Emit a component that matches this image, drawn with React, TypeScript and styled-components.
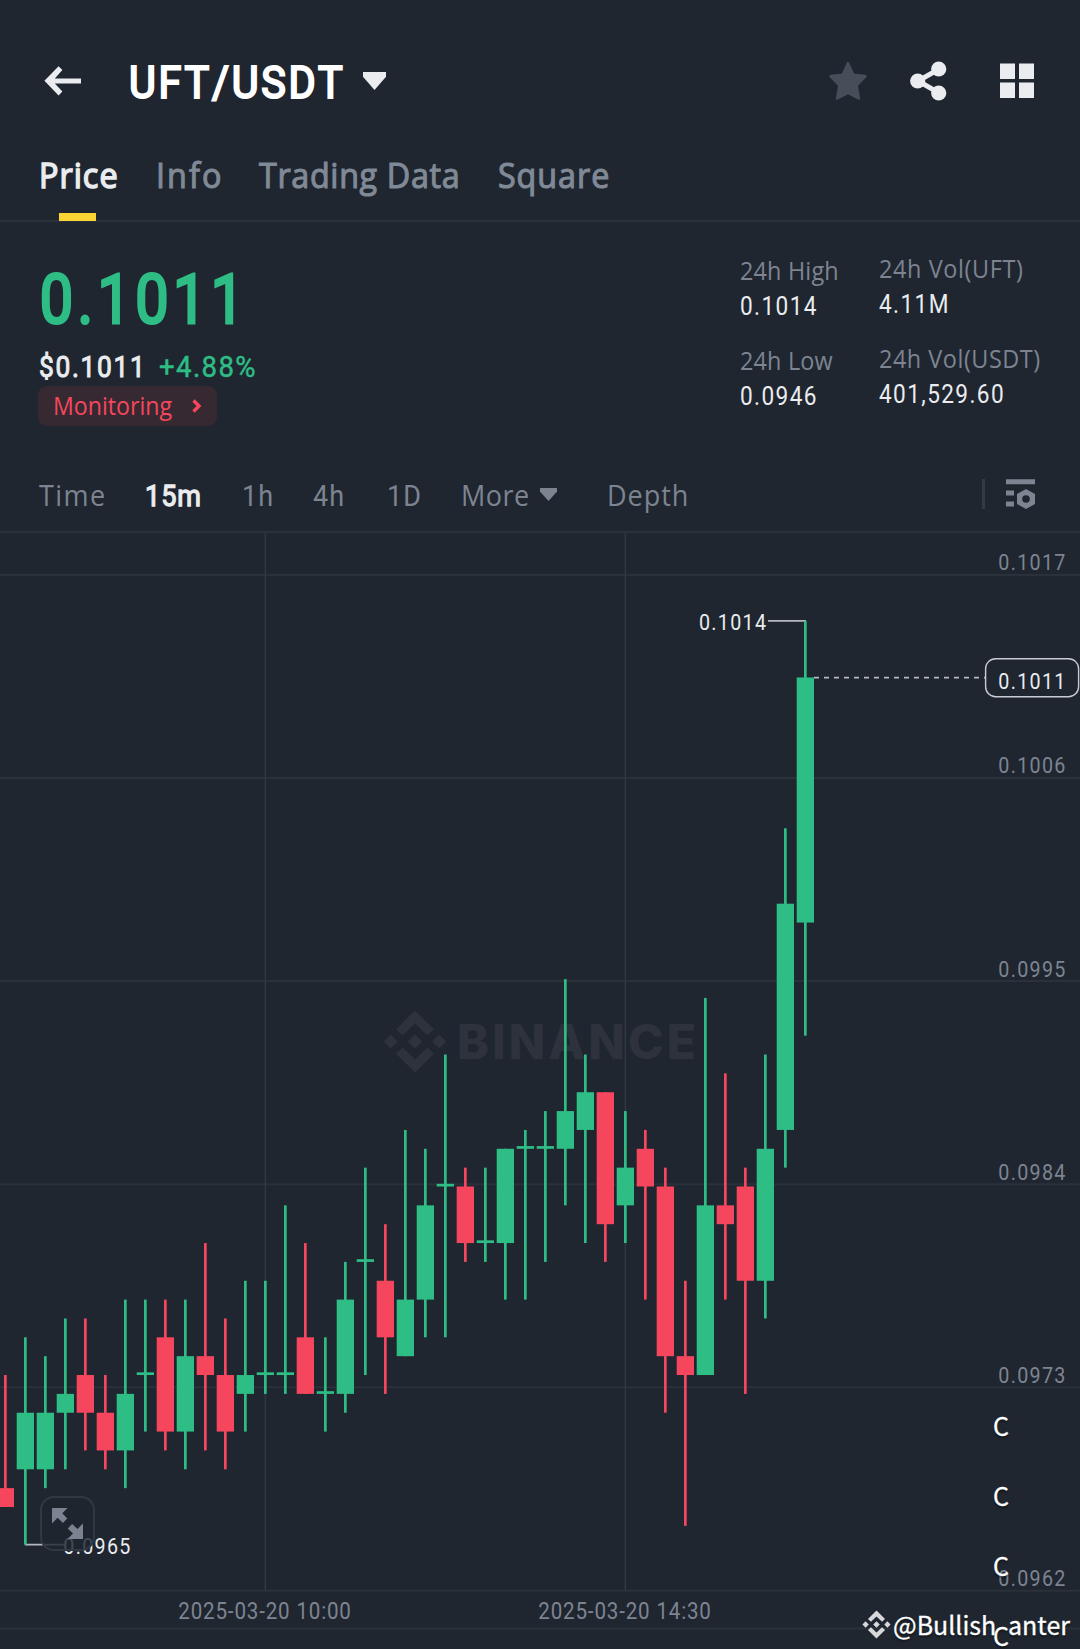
import React from "react";
import styled, { createGlobalStyle } from "styled-components";

const color = {
  bg: "#1f2630",
  line: "#2b313b",
  text: "#eaecef",
  muted: "#808996",
  dim: "#7d8490",
  green: "#2ebd85",
  red: "#f6465d",
  yellow: "#fcd535",
};

const GlobalStyle = createGlobalStyle`
  body { margin: 0; background: ${color.bg}; }
  * { box-sizing: border-box; }
`;

const Screen = styled.main`
  position: relative;
  display: flex;
  flex-direction: column;
  width: 1080px;
  height: 1649px;
  overflow: hidden;
  background: ${color.bg};
  color: ${color.text};
  font-family: "Open Sans", "Noto Sans", sans-serif;
  white-space: nowrap;
`;

/* Header */

const Header = styled.header`
  display: flex;
  align-items: center;
  height: 162px;
  padding: 0 46px 0 44px;
`;

const PairButton = styled.div`
  display: flex;
  align-items: center;
  margin-left: 47px;
`;

const PairName = styled.h1`
  width: 234px;
  margin: 0;
  padding-top: 5px;
  font: 400 43.5px/50px Roboto, sans-serif;
  letter-spacing: 2.9px;
  color: #fff;
  -webkit-text-stroke: 2.1px #fff;
  transform: scaleX(0.95);
  transform-origin: left;
`;

const HeaderActions = styled.div`
  display: flex;
  align-items: center;
  margin-left: auto;
`;

const ShareSlot = styled.span`
  display: flex;
  margin: 0 53px 0 43px;
`;

/* Section tabs */

const Tabs = styled.nav`
  display: grid;
  grid-template-columns: 117px 103px 239px auto;
  justify-content: start;
  height: 60px;
  padding: 1px 0 0 38px;
  border-bottom: 2px solid ${color.line};
`;

const Tab = styled.div<{ $active?: boolean }>`
  display: flex;
  flex-direction: column;
  font-size: 34px;
  line-height: 25px;
  color: ${(p) => (p.$active ? color.text : color.muted)};
  -webkit-text-stroke: ${(p) => (p.$active ? "1.5px" : "1.1px")} currentColor;
`;

const TabLabel = styled.span<{ $tracking: number }>`
  padding-left: 1px;
  letter-spacing: ${(p) => p.$tracking}px;
  transform: scaleX(0.95);
  transform-origin: left;
`;

const TabMarker = styled.span`
  width: 37px;
  height: 8px;
  margin: auto 0 -1px 21px;
  background: ${color.yellow};
`;

/* Price summary */

const Summary = styled.section`
  display: flex;
  justify-content: space-between;
  height: 234px;
  padding: 29px 0 0 38px;
`;

const PriceBlock = styled.div`
  padding-top: 14px;
`;

const LastPrice = styled.div`
  padding-left: 2px;
  font: 400 69px/70px Roboto, sans-serif;
  letter-spacing: 5.1px;
  color: ${color.green};
  -webkit-text-stroke: 3px ${color.green};
  transform: scaleX(0.86);
  transform-origin: left;
`;

const ChangeRow = styled.div`
  display: grid;
  grid-template-columns: 121px auto;
  justify-content: start;
  height: 39px;
  margin-top: 12px;
  font: 400 30px/39px Roboto, sans-serif;
`;

const FiatPrice = styled.span`
  padding-left: 1px;
  letter-spacing: 1.9px;
  -webkit-text-stroke: 1px currentColor;
  transform: scaleX(0.88);
  transform-origin: left;
`;

const Change = styled.span`
  color: ${color.green};
  letter-spacing: 1.5px;
  -webkit-text-stroke: 0.5px currentColor;
  transform: scaleX(0.92);
  transform-origin: left;
`;

const Chip = styled.div`
  display: flex;
  align-items: center;
  width: 179px;
  height: 40px;
  padding-left: 15px;
  border-radius: 9px;
  background: #362932;
  color: ${color.red};
`;

const ChipLabel = styled.span`
  width: 139px;
  padding-bottom: 2px;
  font-size: 26px;
  line-height: 36px;
  transform: scaleX(0.89);
  transform-origin: left;
`;

const Stats = styled.div`
  display: grid;
  grid-template-columns: 139px 201px;
`;

const StatColumn = styled.div<{ $lift?: boolean }>`
  display: flex;
  flex-direction: column;
  gap: 18px;
  padding-top: ${(p) => (p.$lift ? 0 : 2)}px;
`;

const Stat = styled.div`
  display: flex;
  flex-direction: column;
`;

const StatLabel = styled.span<{ $tracking?: number }>`
  font-size: 26px;
  line-height: 35px;
  letter-spacing: ${(p) => p.$tracking ?? 0.2}px;
  color: ${color.dim};
  transform: scaleX(0.9);
  transform-origin: left;
`;

const StatValue = styled.span`
  font: 400 26px/37px Roboto, sans-serif;
  letter-spacing: 1.6px;
  transform: scaleX(0.87);
  transform-origin: left;
`;

/* Interval picker */

const IntervalBar = styled.div`
  display: flex;
  align-items: center;
  height: 77px;
  padding: 2px 45px 0 38px;
  border-bottom: 2px solid ${color.line};
`;

const Intervals = styled.div`
  display: grid;
  grid-template-columns: 107px 97px 71px 74px 74px 146px auto;
  align-items: center;
`;

const Interval = styled.span<{ $active?: boolean; $numeric?: boolean }>`
  font: 400 30px/40px ${(p) => (p.$numeric ? "Roboto" : '"Open Sans"')}, sans-serif;
  padding-top: ${(p) => (p.$numeric ? 2 : 0)}px;
  letter-spacing: 1.1px;
  color: ${(p) => (p.$active ? color.text : color.dim)};
  -webkit-text-stroke: ${(p) => (p.$active ? "1.3px currentColor" : "0")};
  transform: scaleX(0.9);
  transform-origin: left;
`;

const TimeInterval = styled(Interval)`
  padding-left: 1px;
  letter-spacing: 1.6px;
`;

const MoreInterval = styled.span`
  display: flex;
  align-items: center;
`;

const MoreLabel = styled(Interval)`
  width: 79px;
  letter-spacing: 0.5px;
`;

const ChartTools = styled.div`
  display: flex;
  align-items: center;
  gap: 21px;
  margin-left: auto;
  padding-bottom: 2px;
`;

const Divider = styled.span`
  width: 3px;
  height: 30px;
  background: #343a45;
`;

/* Chart */

const ChartArea = styled.section`
  position: relative;
  flex: 1;
`;

const ChartSvg = styled.svg`
  display: block;
  font-family: Roboto, sans-serif;
`;

const ChartText = styled.text<{ $bright?: boolean }>`
  font-size: 22.8px;
  letter-spacing: 1.5px;
  fill: ${(p) => (p.$bright ? color.text : color.dim)};
`;

const DateText = styled(ChartText)`
  font-size: 23.8px;
  letter-spacing: 0.95px;
`;

const ExpandButton = styled.button`
  position: absolute;
  left: 40px;
  top: 963px;
  display: flex;
  align-items: center;
  justify-content: center;
  width: 55px;
  height: 55px;
  padding: 0;
  border: 2px solid #323842;
  border-radius: 14px;
  background: rgba(31, 38, 48, 0.82);
`;

/* Author credit laid over the chart */

const Credit = styled.div`
  position: absolute;
  left: 862px;
  top: 1604px;
  display: flex;
  align-items: center;
  font: 400 25px/40px "Noto Sans CJK SC", sans-serif;
  color: #fff;
  -webkit-text-stroke: 0.3px #fff;
  text-shadow: 0 2px 2px rgba(0, 0, 0, 0.45);
`;

const CreditName = styled.span`
  width: 115px;
  margin-left: 2px;
`;

const LetterColumn = styled.div`
  position: absolute;
  left: 993px;
  top: 1390px;
  display: flex;
  flex-direction: column;
  font: 400 25px/70px "Noto Sans CJK SC", sans-serif;
  color: #fff;
  -webkit-text-stroke: 0.3px #fff;
  text-shadow: 0 2px 2px rgba(0, 0, 0, 0.45);
`;

const BackIcon = () => (
  <svg width="38" height="30" viewBox="0 0 38 30">
    <path d="M37 12.4H10.8L18.4 4.1L14.6 0.3L0.4 14.8L14.6 29.5L18.4 25.6L10.8 17.6H37Z" fill={color.text} />
  </svg>
);

const Caret = ({ w, h, fill }: { w: number; h: number; fill: string }) => (
  <svg width={w} height={h} viewBox="0 0 23 18" preserveAspectRatio="none">
    <path d="M0 0H23V4.7L11.5 18L0 4.7Z" fill={fill} />
  </svg>
);

const StarIcon = () => (
  <svg width="38" height="40" viewBox="0 0 38 40">
    <path
      d="M19 2.6L24.1 14L36.2 15.2L27.4 24.2L29.7 37.3L19 31.6L8.3 37.3L10.6 24.2L1.8 15.2L13.9 14Z"
      fill="#474d59"
      stroke="#474d59"
      strokeWidth="3"
      strokeLinejoin="round"
    />
  </svg>
);

const ShareIcon = () => (
  <svg width="37" height="40" viewBox="0 0 37 40">
    <path d="M28.5 8.3L8 20L28.5 31.7" fill="none" stroke={color.text} strokeWidth="5" />
    <circle cx="28.7" cy="8" r="7.6" fill={color.text} />
    <circle cx="7.7" cy="20" r="7.6" fill={color.text} />
    <circle cx="28.7" cy="32" r="7.6" fill={color.text} />
  </svg>
);

const GridIcon = () => (
  <svg width="34" height="37" viewBox="0 0 34 37">
    <path d="M0 0.5H15V16H0ZM19 0.5H34V16H19ZM0 19.5H15V35H0ZM19 19.5H34V35H19Z" fill={color.text} />
  </svg>
);

const ChevronIcon = () => (
  <svg width="10" height="14" viewBox="0 0 10 14">
    <path d="M1.5 1.5L7 7L1.5 12.5" fill="none" stroke={color.red} strokeWidth="3.4" />
  </svg>
);

const IndicatorIcon = () => (
  <svg width="29" height="30" viewBox="0 0 29 30">
    <path d="M0 0.3H29V5.3H0ZM0 11.4H8V16.4H0ZM0 22.6H8V27.6H0Z" fill="#7d8492" />
    <path
      fillRule="evenodd"
      d="M20 10L29 15V25L20 30L11 25V15ZM20 16.2A3.8 3.8 0 1 0 20 23.8A3.8 3.8 0 1 0 20 16.2Z"
      fill="#7d8492"
    />
  </svg>
);

const ExpandIcon = () => (
  <svg width="31" height="31" viewBox="0 0 31 31">
    <path
      d="M0 0H15.6L10.3 5.3L15.3 10.4L10.9 15L5.6 9.8L0 15.6ZM31 31H15.6L21 25.6L15.8 20.4L20.2 15.9L25.4 21L31 15.4Z"
      fill="#7b8290"
    />
  </svg>
);

const LogoShape = () => (
  <path d="M0 -93L57 -37L37 -18L0 -54L-37 -18L-57 -37ZM0 93L57 37L37 18L0 54L-37 18L-57 37ZM0 -22L22 0L0 22L-22 0ZM-73 -21L-52 0L-73 21L-94 0ZM73 -21L94 0L73 21L52 0Z" />
);

const CreditLogo = () => (
  <svg width="29" height="29" viewBox="-97 -97 194 194" fill="#d6d8dc">
    <LogoShape />
  </svg>
);

/* Candles as ticks of 0.0001 above 0.0965: high, body top, body bottom, low, direction */
type Candle = [number, number, number, number, "u" | "d"];
const candles: Candle[] = [
  [9, 3, 2, 2, "d"], [11, 7, 4, 0, "u"], [10, 7, 4, 3, "u"], [12, 8, 7, 4, "u"], [12, 9, 7, 5, "d"],
  [9, 7, 5, 4, "d"], [13, 8, 5, 3, "u"], [13, 9, 9, 6, "u"], [13, 11, 6, 5, "d"], [13, 10, 6, 4, "u"],
  [16, 10, 9, 5, "d"], [12, 9, 6, 4, "d"], [14, 9, 8, 6, "u"], [14, 9, 9, 8, "u"], [18, 9, 9, 8, "u"],
  [16, 11, 8, 8, "d"], [11, 8, 8, 6, "u"], [15, 13, 8, 7, "u"], [20, 15, 15, 9, "u"], [17, 14, 11, 8, "d"],
  [22, 13, 10, 10, "u"], [21, 18, 13, 11, "u"], [26, 19, 19, 11, "u"], [20, 19, 16, 15, "d"], [20, 16, 16, 15, "u"],
  [21, 21, 16, 13, "u"], [22, 21, 21, 13, "u"], [23, 21, 21, 15, "u"], [30, 23, 21, 18, "u"], [26, 24, 22, 16, "u"],
  [24, 24, 17, 15, "d"], [23, 20, 18, 16, "u"], [22, 21, 19, 13, "d"], [20, 19, 10, 7, "d"], [14, 10, 9, 1, "d"],
  [29, 18, 9, 9, "u"], [25, 18, 17, 13, "d"], [20, 19, 14, 8, "d"], [26, 21, 14, 12, "u"], [38, 34, 22, 20, "u"],
  [49, 46, 33, 27, "u"],
];

const TOP = 533;
const y = (tick: number) => 1544.7 - tick * 18.853;
const condensed = (x: number, baseline: number) => `translate(${x} ${baseline}) scale(0.865 1)`;

const priceLines: [string, number, number][] = [
  ["0.1017", 575, 569.6], ["0.1006", 778, 773], ["0.0995", 981, 977],
  ["0.0984", 1184.3, 1180], ["0.0973", 1387.3, 1383], ["0.0962", 1590.7, 1586],
];

const Chart = () => (
  <ChartSvg width="1080" height="1116" viewBox={`0 ${TOP} 1080 1116`}>
    {priceLines.map(([label, ly]) => (
      <rect key={label} x="0" y={ly - 1} width="1080" height="2" fill={color.line} />
    ))}
    <rect x="0" y="1627.5" width="1080" height="2" fill={color.line} />
    <g fill="#2d323d">
      <g transform="translate(415 1041.5) scale(0.3333)">
        <LogoShape />
      </g>
      <text
        x="457" y="1059" fontFamily="Inter" fontSize="48" fontWeight="800"
        textLength="239" lengthAdjust="spacing"
      >
        BINANCE
      </text>
    </g>
    <path d="M265.3 533V1590M625.3 533V1590" stroke="#343a44" strokeWidth="1.3" />
    <path d="M768 620.9H806M25 1544.7H66" stroke="#b3b7be" strokeWidth="1.7" />
    {candles.map(([high, top, bottom, low, dir], i) => {
      const cx = 5.3 + i * 20;
      const doji = top === bottom;
      return (
        <g key={i} fill={dir === "u" ? color.green : color.red}>
          <rect x={cx - 1.3} y={y(high)} width="2.7" height={y(low) - y(high)} />
          <rect x={cx - 8.6} y={doji ? y(top) - 2.7 : y(top)} width="17.3" height={doji ? 2.7 : y(bottom) - y(top)} />
        </g>
      );
    })}
    <path d="M814 677.6H985" stroke="#b3b7be" strokeWidth="1.6" strokeDasharray="5 5" />
    <rect x="985.6" y="658.7" width="93" height="38" rx="10" fill={color.bg} stroke="#c9ccd2" strokeWidth="1.4" />
    {priceLines.map(([label, , ty]) => (
      <ChartText key={label} transform={condensed(998.3, ty)}>{label}</ChartText>
    ))}
    <DateText transform={condensed(178.3, 1618.7)}>2025-03-20 10:00</DateText>
    <DateText transform={condensed(538.3, 1618.7)}>2025-03-20 14:30</DateText>
    <ChartText $bright transform={condensed(699, 629.9)}>0.1014</ChartText>
    <ChartText $bright transform={condensed(998.3, 688.8)}>0.1011</ChartText>
    <ChartText $bright transform={condensed(63.3, 1554)}>0.0965</ChartText>
  </ChartSvg>
);

export default function App() {
  return (
    <Screen>
      <GlobalStyle />
      <Header>
        <BackIcon />
        <PairButton>
          <PairName>UFT/USDT</PairName>
          <Caret w={23} h={18} fill={color.text} />
        </PairButton>
        <HeaderActions>
          <StarIcon />
          <ShareSlot><ShareIcon /></ShareSlot>
          <GridIcon />
        </HeaderActions>
      </Header>

      <Tabs>
        <Tab $active>
          <TabLabel $tracking={1.1}>Price</TabLabel>
          <TabMarker />
        </Tab>
        <Tab><TabLabel $tracking={2.2}>Info</TabLabel></Tab>
        <Tab><TabLabel $tracking={0.7}>Trading Data</TabLabel></Tab>
        <Tab><TabLabel $tracking={1}>Square</TabLabel></Tab>
      </Tabs>

      <Summary>
        <PriceBlock>
          <LastPrice>0.1011</LastPrice>
          <ChangeRow>
            <FiatPrice>$0.1011</FiatPrice>
            <Change>+4.88%</Change>
          </ChangeRow>
          <Chip>
            <ChipLabel>Monitoring</ChipLabel>
            <ChevronIcon />
          </Chip>
        </PriceBlock>
        <Stats>
          <StatColumn>
            <Stat><StatLabel>24h High</StatLabel><StatValue>0.1014</StatValue></Stat>
            <Stat><StatLabel>24h Low</StatLabel><StatValue>0.0946</StatValue></Stat>
          </StatColumn>
          <StatColumn $lift>
            <Stat><StatLabel $tracking={0.7}>24h Vol(UFT)</StatLabel><StatValue>4.11M</StatValue></Stat>
            <Stat><StatLabel $tracking={0.6}>24h Vol(USDT)</StatLabel><StatValue>401,529.60</StatValue></Stat>
          </StatColumn>
        </Stats>
      </Summary>

      <IntervalBar>
        <Intervals>
          <TimeInterval>Time</TimeInterval>
          <Interval $active $numeric>15m</Interval>
          <Interval $numeric>1h</Interval>
          <Interval $numeric>4h</Interval>
          <Interval $numeric>1D</Interval>
          <MoreInterval>
            <MoreLabel>More</MoreLabel>
            <Caret w={17} h={13} fill={color.dim} />
          </MoreInterval>
          <Interval>Depth</Interval>
        </Intervals>
        <ChartTools>
          <Divider />
          <IndicatorIcon />
        </ChartTools>
      </IntervalBar>

      <ChartArea>
        <Chart />
        <ExpandButton aria-label="Full screen"><ExpandIcon /></ExpandButton>
      </ChartArea>

      <LetterColumn>
        <span>C</span>
        <span>C</span>
        <span>C</span>
        <span>C</span>
      </LetterColumn>
      <Credit>
        <CreditLogo />
        <CreditName>@Bullish</CreditName>
        <span>anter</span>
      </Credit>
    </Screen>
  );
}
